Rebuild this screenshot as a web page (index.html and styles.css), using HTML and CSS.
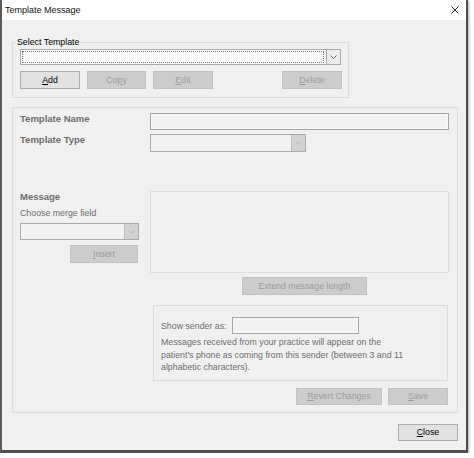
FILE: index.html
```html
<!DOCTYPE html>
<html>
<head>
<meta charset="utf-8">
<title>Template Message</title>
<link rel="stylesheet" href="styles.css">
</head>
<body>
<div class="window">
  <div class="titlebar">
    <span class="title">Template Message</span>
    <svg class="close-x" width="8" height="8" viewBox="0 0 8 8"><path d="M0.5 0.5 L7.5 7.5 M7.5 0.5 L0.5 7.5" stroke="#222" stroke-width="1" fill="none"/></svg>
  </div>
  <div class="body">
    <div class="group group-select">
      <div class="legend">Select Template</div>
      <div class="combo combo-active">
        <div class="combo-field"><div class="focus-rect"></div></div>
        <div class="combo-btn"><svg width="7" height="4" viewBox="0 0 7 4"><path d="M0.5 0.5 L3.5 3.5 L6.5 0.5" stroke="#666" fill="none"/></svg></div>
      </div>
      <div class="btn-row">
        <button class="btn"><u>A</u>dd</button>
        <button class="btn btn-disabled">Co<u>p</u>y</button>
        <button class="btn btn-disabled"><u>E</u>dit</button>
        <button class="btn btn-disabled btn-delete"><u>D</u>elete</button>
      </div>
    </div>

    <div class="group group-edit">
      <div class="form-row">
        <div class="label-bold">Template Name</div>
        <div class="input input-name"></div>
      </div>
      <div class="form-row row-type">
        <div class="label-bold">Template Type</div>
        <div class="combo combo-disabled combo-type">
          <div class="combo-field"></div>
          <div class="combo-btn"><svg width="7" height="4" viewBox="0 0 7 4"><path d="M0.5 0.5 L3.5 3.5 L6.5 0.5" stroke="#b4b4b4" fill="none"/></svg></div>
        </div>
      </div>
      <div class="form-row row-message">
        <div class="message-left">
          <div class="label-bold">Message</div>
          <div class="label-plain merge-label">Choose merge field</div>
          <div class="combo combo-disabled combo-merge">
            <div class="combo-field"></div>
            <div class="combo-btn"><svg width="7" height="4" viewBox="0 0 7 4"><path d="M0.5 0.5 L3.5 3.5 L6.5 0.5" stroke="#b4b4b4" fill="none"/></svg></div>
          </div>
          <button class="btn btn-disabled btn-insert"><u>I</u>nsert</button>
        </div>
        <div class="message-right">
          <div class="textarea"></div>
          <button class="btn btn-disabled btn-extend">Extend message length</button>
          <div class="sender-box">
            <div class="sender-row">
              <span class="label-plain sender-label">Show sender as:</span>
              <div class="input input-sender"></div>
            </div>
            <p class="sender-note">Messages received from your practice will appear on the<br>patient's phone as coming from this sender (between 3 and 11<br>alphabetic characters).</p>
          </div>
          <div class="action-row">
            <button class="btn btn-disabled btn-revert"><u>R</u>evert Changes</button>
            <button class="btn btn-disabled btn-save"><u>S</u>ave</button>
          </div>
        </div>
      </div>
    </div>

    <button class="btn btn-close"><u>C</u>lose</button>
  </div>
</div>
</body>
</html>
```

FILE: styles.css
```css
html, body {
  margin: 0;
  padding: 0;
  background: #ffffff;
}

body {
  font-family: "Liberation Sans", Arial, sans-serif;
  font-size: 8.8px;
  color: #000;
}

.window {
  width: 468px;
  box-sizing: border-box;
  border-left: 2px solid #5a5a5a;
  border-right: 2px solid #4f4f4f;
  border-bottom: 3px solid #4f4f4f;
  box-shadow: 1px 1px 2px rgba(0, 0, 0, 0.35);
}

.titlebar {
  height: 20px;
  background: #ffffff;
  display: flex;
  align-items: center;
  justify-content: space-between;
  padding: 0 7px 0 3px;
}

.title {
  font-size: 9px;
  color: #111;
}

.close-x {
  display: block;
}

.body {
  height: 430px;
  box-sizing: border-box;
  background: #f0f0f0;
  padding: 22px 8px 0 10px;
  display: flex;
  flex-direction: column;
}

.group {
  box-sizing: border-box;
  border: 1px solid #dcdcdc;
}

.group-select {
  width: 337px;
  height: 56px;
  padding: 0 7px;
}

.legend {
  width: fit-content;
  margin: -6px 0 0 -4px;
  padding: 0 1px;
  line-height: 11px;
  background: #f0f0f0;
  color: #000;
}

/* combo boxes */
.combo {
  display: flex;
  box-sizing: border-box;
  border: 1px solid #a9a9a9;
}

.combo-field {
  flex: 1;
  position: relative;
}

.combo-btn {
  width: 13px;
  display: flex;
  align-items: center;
  justify-content: center;
  border-left: 1px solid #a9a9a9;
}

.combo-active {
  margin-top: 1px;
  height: 16px;
  background: #fbfbfb;
}

.combo-active .combo-btn {
  background: #ececec;
}

.focus-rect {
  position: absolute;
  inset: 1px 2px 1px 1px;
  border: 1px dotted #7a7a7a;
}

.combo-disabled {
  background: #f2f2f2;
  border-color: #ababab;
}

.combo-disabled .combo-btn {
  background: #d2d2d2;
  border-left-color: #bdbdbd;
}

.combo-type {
  width: 156px;
  height: 18px;
}

.combo-merge {
  width: 119px;
  height: 17px;
  margin-top: 4px;
}

/* buttons */
.btn {
  box-sizing: border-box;
  font: inherit;
  padding: 0;
  margin: 0;
  height: 18px;
  width: 60px;
  background: #e1e1e1;
  border: 1px solid #adadad;
  color: #000;
  text-align: center;
  line-height: 15px;
}

.btn u {
  text-decoration-thickness: 1px;
  text-underline-offset: 1px;
}

.btn-disabled {
  background: #cccccc;
  border-color: #c2c2c2;
  color: #9c9c9c;
}

.btn-row {
  display: flex;
  gap: 7px;
  margin-top: 6px;
}

.btn-row .btn:nth-child(2) {
  width: 59px;
}

.btn-delete {
  margin-left: auto;
  margin-right: -1px;
}

.group-edit {
  width: 446px;
  height: 306px;
  margin-top: 9px;
  padding: 5px 8px 0 7px;
}

.form-row {
  display: grid;
  grid-template-columns: 130px 299px;
}

.label-bold {
  font-weight: bold;
  font-size: 9.5px;
  color: #6d6d6d;
  line-height: 12px;
}

.label-plain {
  color: #6d6d6d;
}

.input {
  box-sizing: border-box;
  border: 1px solid #a6a6a6;
  background: #f2f2f2;
  box-shadow: inset 0 0 0 1px #f8f8f8;
}

.input-name {
  height: 17px;
}

.row-type {
  margin-top: 4px;
}

.row-message {
  margin-top: 39px;
}

.message-left {
  display: flex;
  flex-direction: column;
  align-items: flex-start;
}

.merge-label {
  margin-top: 4px;
  line-height: 12px;
}

.btn-insert {
  width: 68px;
  margin-left: 50px;
  margin-top: 5px;
}

.message-right {
  display: flex;
  flex-direction: column;
  align-items: flex-start;
}

.textarea {
  box-sizing: border-box;
  width: 299px;
  height: 82px;
  border: 1px solid #dddddd;
  background: #f0f0f0;
}

.btn-extend {
  width: 125px;
  margin-top: 4px;
  margin-left: 92px;
}

.sender-box {
  box-sizing: border-box;
  width: 295px;
  height: 76px;
  margin-top: 10px;
  margin-left: 3px;
  border: 1px solid #dcdcdc;
  padding: 11px 7px 0 7px;
}

.sender-row {
  display: flex;
  align-items: center;
}

.sender-label {
  width: 71px;
}

.input-sender {
  width: 127px;
  height: 17px;
}

.sender-note {
  margin: 2px 0 0 0;
  line-height: 12.5px;
  color: #6d6d6d;
}

.action-row {
  display: flex;
  gap: 6px;
  margin-top: 7px;
  align-self: flex-end;
  margin-right: 1px;
}

.btn-revert {
  width: 86px;
  height: 17px;
}

.btn-save {
  width: 60px;
  height: 17px;
}

.btn-close {
  align-self: flex-end;
  margin-top: 11px;
  height: 17px;
}
```
